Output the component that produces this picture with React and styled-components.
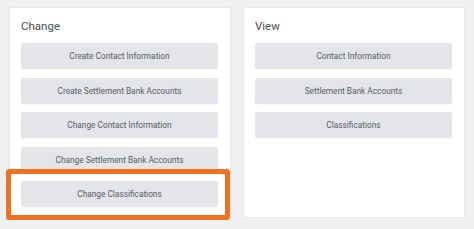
import React from "react";
import styled, { createGlobalStyle } from "styled-components";

const GlobalStyle = createGlobalStyle`
  html, body {
    margin: 0;
    padding: 0;
    background: #eef0f2;
    font-family: Roboto, "Liberation Sans", sans-serif;
  }
`;

const changeActions = [
  "Create Contact Information",
  "Create Settlement Bank Accounts",
  "Change Contact Information",
  "Change Settlement Bank Accounts",
  "Change Classifications",
];

const viewActions = ["Contact Information", "Settlement Bank Accounts", "Classifications"];

const App = () => {
  return (
    <Page>
      <GlobalStyle />
      <Card>
        <Title>Change</Title>
        <Actions>
          {changeActions.map((label) => (
            <ActionButton key={label}>{label}</ActionButton>
          ))}
        </Actions>
        <Highlight />
      </Card>
      <Card>
        <Title>View</Title>
        <Actions>
          {viewActions.map((label) => (
            <ActionButton key={label}>{label}</ActionButton>
          ))}
        </Actions>
      </Card>
    </Page>
  );
};

export default App;

//---------------------------STYLES-------------------------------------------//

const Page = styled.div`
  width: 474px;
  height: 229px;
  box-sizing: border-box;
  padding: 7px 9px 11px 9px;
  display: grid;
  grid-template-columns: 222px 222px;
  column-gap: 12px;
`;

const Card = styled.div`
  position: relative;
  background: #ffffff;
  border: 1px solid #e6e8eb;
  box-sizing: border-box;
  padding: 11px 12px 0 11px;
  display: flex;
  flex-direction: column;
`;

const Title = styled.h2`
  margin: 0;
  font-size: 11.5px;
  font-weight: 400;
  line-height: 14px;
  color: #4a4f55;
`;

const Actions = styled.div`
  margin-top: 10px;
  display: flex;
  flex-direction: column;
  gap: 8.5px;
`;

const ActionButton = styled.button`
  height: 26px;
  width: 100%;
  border: none;
  border-radius: 2px;
  background: #e3e5e8;
  box-shadow: 0 1px 1px rgba(0, 0, 0, 0.03);
  font-family: Roboto, "Liberation Sans", sans-serif;
  font-size: 8.3px;
  color: #585d62;
  padding: 0;
  cursor: pointer;
`;

const Highlight = styled.div`
  position: absolute;
  left: -4px;
  top: 161px;
  width: 224px;
  height: 51px;
  box-sizing: border-box;
  border: 5px solid #f37021;
  border-radius: 3px;
  pointer-events: none;
`;
